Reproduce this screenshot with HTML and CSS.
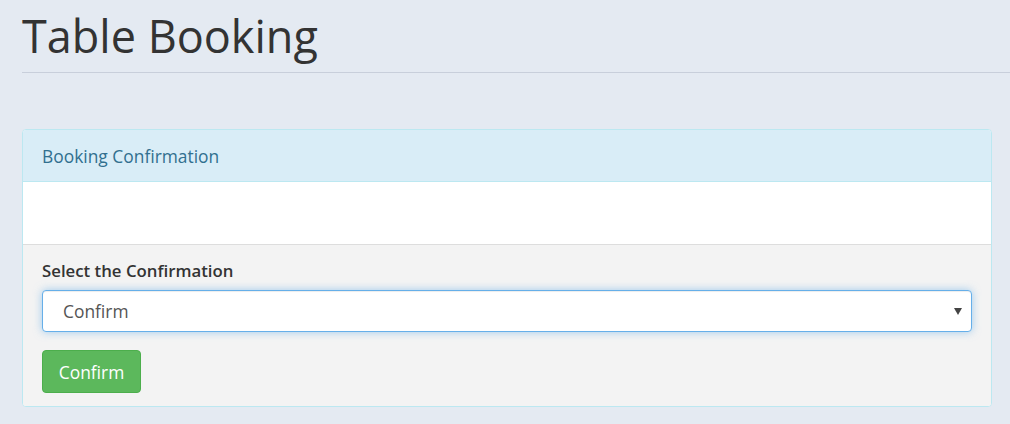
FILE: index.html
```html
<!DOCTYPE html>
<html lang="en">
<head>
<meta charset="utf-8">
<title>Table Booking</title>
<link rel="stylesheet" href="styles.css">
</head>
<body>
<div class="page">
  <header class="page-header">
    <h1 class="title">Table Booking</h1>
  </header>
  <section class="panel">
    <div class="panel-heading">Booking Confirmation</div>
    <div class="panel-body"></div>
    <div class="panel-footer">
      <label class="field-label" for="confirm">Select the Confirmation</label>
      <div class="select-wrap">
        <select id="confirm" class="select">
          <option>Confirm</option>
          <option>Cancel</option>
        </select>
        <svg class="select-arrow" width="8" height="7" viewBox="0 0 8 7"><path d="M0 0H8L4 7Z" fill="#444"/></svg>
      </div>
      <div class="actions">
        <button class="btn-success" type="button">Confirm</button>
      </div>
    </div>
  </section>
</div>
</body>
</html>
```
FILE: styles.css
```css
html, body {
  margin: 0;
  padding: 0;
}
body {
  background: #e4eaf2;
  font-family: "Open Sans", "Liberation Sans", sans-serif;
  color: #333;
  height: 424px;
  overflow: hidden;
}
.page {
  padding-left: 22px;
}
.page-header {
  border-bottom: 1px solid #c8cfdb;
  height: 73px;
  box-sizing: border-box;
}
.title {
  margin: 0;
  padding-top: 7px;
  font-size: 45px;
  font-weight: 400;
  line-height: 58px;
  color: #333;
}
.panel {
  margin: 56px 18px 0 0;
  border: 1px solid #bce8f1;
  border-radius: 4px;
  background: #fff;
  overflow: hidden;
}
.panel-heading {
  background: #d9edf7;
  color: #31708f;
  border-bottom: 1px solid #bce8f1;
  height: 52px;
  box-sizing: border-box;
  display: flex;
  align-items: center;
  padding: 0 19px;
  font-size: 17.4px;
}
.panel-body {
  height: 62px;
}
.panel-footer {
  background: #f3f3f3;
  border-top: 1px solid #ddd;
  padding: 14px 19px 13px;
  display: flex;
  flex-direction: column;
}
.field-label {
  font-size: 16.8px;
  font-weight: 600;
  color: #333;
  line-height: 24px;
  margin-bottom: 7px;
}
.select-wrap {
  position: relative;
}
.select {
  appearance: none;
  -webkit-appearance: none;
  width: 100%;
  height: 42px;
  box-sizing: border-box;
  border: 1px solid #66afe9;
  border-radius: 4px;
  background: #fff;
  box-shadow: inset 0 1px 1px rgba(0,0,0,.075), 0 0 8px rgba(102,175,233,.6);
  font-family: "Open Sans", "Liberation Sans", sans-serif;
  font-size: 17.4px;
  color: #555;
  padding: 0 20px;
  outline: none;
}
.select-arrow {
  position: absolute;
  right: 10px;
  top: 18px;
}
.actions {
  margin-top: 18px;
  display: flex;
}
.btn-success {
  background: #5cb85c;
  border: 1px solid #4cae4c;
  border-radius: 4px;
  color: #fff;
  font-family: "Open Sans", "Liberation Sans", sans-serif;
  font-size: 17.4px;
  height: 43px;
  width: 99px;
  padding: 0;
}
```
